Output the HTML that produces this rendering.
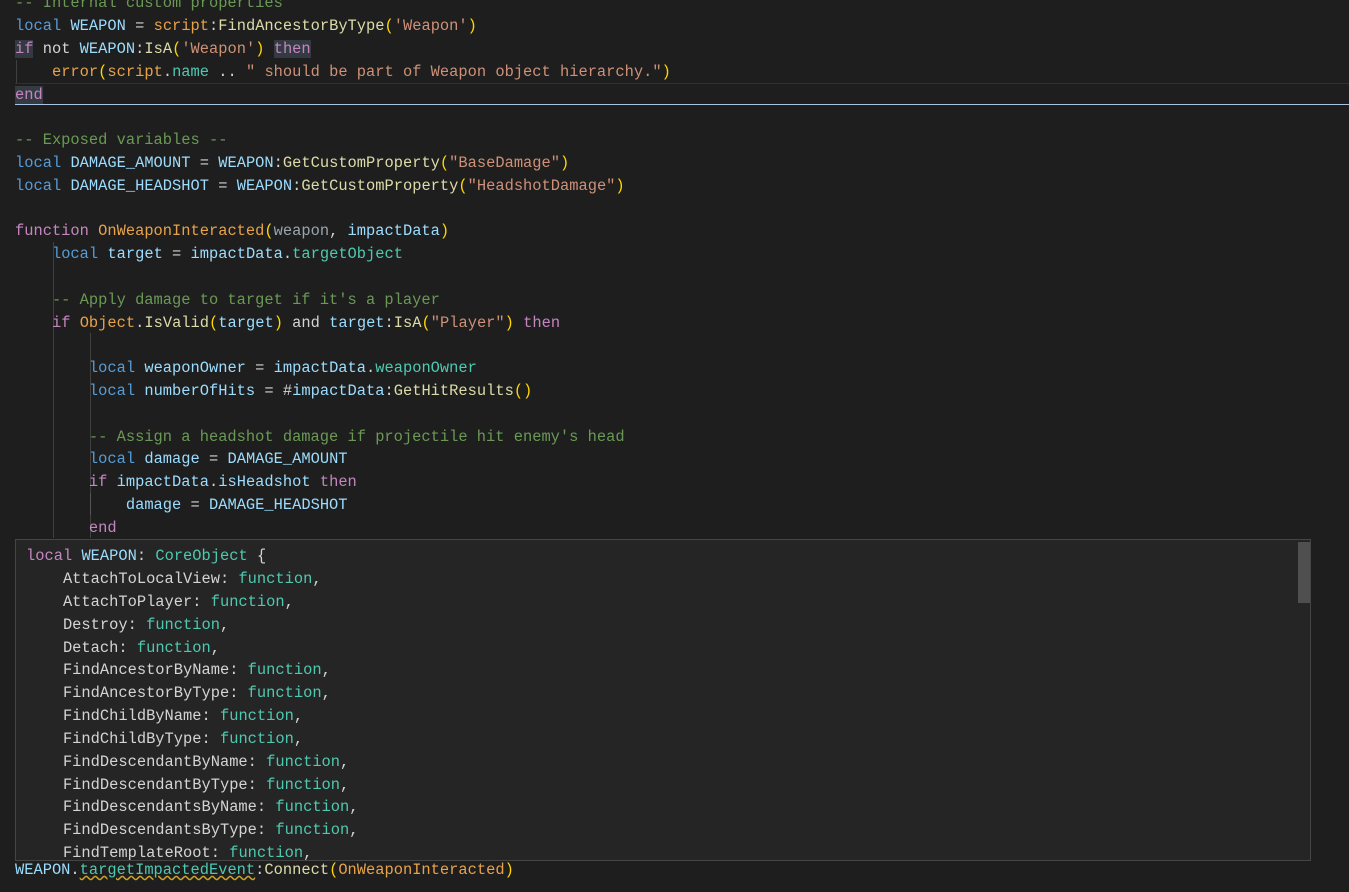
<!DOCTYPE html>
<html><head><meta charset="utf-8"><style>
body{margin:0;width:1349px;height:892px;background:#1e1e1e;overflow:hidden;position:relative;font-family:"Liberation Mono",monospace;font-size:15.4px;color:#d4d4d4}
.l{position:absolute;left:15px;height:22.8px;line-height:22.8px;white-space:pre;transform:translateY(1px)}
.k{color:#569cd6}.v{color:#9cdcfe}.f{color:#dcdcaa}.s{color:#ce9178}.c{color:#6a9955}.p{color:#c586c0}.o{color:#e8a24a}.t{color:#4ec9b0}.b{color:#ffd700}.g{color:#9aa4ad}.w{color:#d4d4d4}
.hl{background:#343a42}
.guide{position:absolute;width:1px;background:#404040}
#pop{position:absolute;left:15px;top:539px;width:1294px;height:320px;background:#252526;border:1px solid #454545;overflow:hidden}
#pop .l{left:10px}
</style></head><body>
<div class="guide" style="left:16px;top:60px;height:23px"></div>
<div class="guide" style="left:53px;top:242px;height:296px"></div>
<div class="guide" style="left:90px;top:333px;height:205px"></div>
<div class="guide" style="left:90px;top:493px;height:22px;background:#555"></div>
<div style="position:absolute;left:15px;right:0;top:83px;height:1px;background:#303030"></div>
<div style="position:absolute;left:15px;right:0;top:104px;height:1px;background:#a8c4e0"></div>

<div class="l c" style="top:-9px">-- Internal custom properties</div>
<div class="l" style="top:14px"><span class="k">local</span> <span class="v">WEAPON</span> = <span class="o">script</span>:<span class="f">FindAncestorByType</span><span class="b">(</span><span class="s">'Weapon'</span><span class="b">)</span></div>
<div class="l" style="top:37px"><span class="p hl">if</span> not <span class="v">WEAPON</span>:<span class="f">IsA</span><span class="b">(</span><span class="s">'Weapon'</span><span class="b">)</span> <span class="p hl">then</span></div>
<div class="l" style="top:60px">    <span class="o">error</span><span class="b">(</span><span class="o">script</span>.<span class="t">name</span> .. <span class="s">" should be part of Weapon object hierarchy."</span><span class="b">)</span></div>
<div class="l" style="top:83px"><span class="p hl">end</span></div>
<div class="l c" style="top:128px">-- Exposed variables --</div>
<div class="l" style="top:151px"><span class="k">local</span> <span class="v">DAMAGE_AMOUNT</span> = <span class="v">WEAPON</span>:<span class="f">GetCustomProperty</span><span class="b">(</span><span class="s">"BaseDamage"</span><span class="b">)</span></div>
<div class="l" style="top:174px"><span class="k">local</span> <span class="v">DAMAGE_HEADSHOT</span> = <span class="v">WEAPON</span>:<span class="f">GetCustomProperty</span><span class="b">(</span><span class="s">"HeadshotDamage"</span><span class="b">)</span></div>
<div class="l" style="top:219px"><span class="p">function</span> <span class="o">OnWeaponInteracted</span><span class="b">(</span><span class="g">weapon</span>, <span class="v">impactData</span><span class="b">)</span></div>
<div class="l" style="top:242px">    <span class="k">local</span> <span class="v">target</span> = <span class="v">impactData</span>.<span class="t">targetObject</span></div>
<div class="l c" style="top:288px">    -- Apply damage to target if it's a player</div>
<div class="l" style="top:311px">    <span class="p">if</span> <span class="o">Object</span>.<span class="f">IsValid</span><span class="b">(</span><span class="v">target</span><span class="b">)</span> and <span class="v">target</span>:<span class="f">IsA</span><span class="b">(</span><span class="s">"Player"</span><span class="b">)</span> <span class="p">then</span></div>
<div class="l" style="top:356px">        <span class="k">local</span> <span class="v">weaponOwner</span> = <span class="v">impactData</span>.<span class="t">weaponOwner</span></div>
<div class="l" style="top:379px">        <span class="k">local</span> <span class="v">numberOfHits</span> = #<span class="v">impactData</span>:<span class="f">GetHitResults</span><span class="b">()</span></div>
<div class="l c" style="top:425px">        -- Assign a headshot damage if projectile hit enemy's head</div>
<div class="l" style="top:447px">        <span class="k">local</span> <span class="v">damage</span> = <span class="v">DAMAGE_AMOUNT</span></div>
<div class="l" style="top:470px">        <span class="p">if</span> <span class="v">impactData</span>.<span class="v">isHeadshot</span> <span class="p">then</span></div>
<div class="l" style="top:493px">            <span class="v">damage</span> = <span class="v">DAMAGE_HEADSHOT</span></div>
<div class="l" style="top:516px">        <span class="p">end</span></div>
<div class="l" style="top:858px"><span class="v">WEAPON</span>.<span class="t" style="text-decoration:underline wavy #c9a227">targetImpactedEvent</span>:<span class="f">Connect</span><span class="b">(</span><span class="o">OnWeaponInteracted</span><span class="b">)</span></div>

<div id="pop">
<div style="position:absolute;right:0;top:2px;width:12px;height:61px;background:#4f4f4f"></div>
<div class="l" style="top:4px"><span class="p">local</span> <span class="v">WEAPON</span>: <span class="t">CoreObject</span> {</div>
<div class="l" style="top:27px">    AttachToLocalView: <span class="t">function</span>,</div>
<div class="l" style="top:50px">    AttachToPlayer: <span class="t">function</span>,</div>
<div class="l" style="top:73px">    Destroy: <span class="t">function</span>,</div>
<div class="l" style="top:96px">    Detach: <span class="t">function</span>,</div>
<div class="l" style="top:118px">    FindAncestorByName: <span class="t">function</span>,</div>
<div class="l" style="top:141px">    FindAncestorByType: <span class="t">function</span>,</div>
<div class="l" style="top:164px">    FindChildByName: <span class="t">function</span>,</div>
<div class="l" style="top:187px">    FindChildByType: <span class="t">function</span>,</div>
<div class="l" style="top:210px">    FindDescendantByName: <span class="t">function</span>,</div>
<div class="l" style="top:233px">    FindDescendantByType: <span class="t">function</span>,</div>
<div class="l" style="top:255px">    FindDescendantsByName: <span class="t">function</span>,</div>
<div class="l" style="top:278px">    FindDescendantsByType: <span class="t">function</span>,</div>
<div class="l" style="top:301px">    FindTemplateRoot: <span class="t">function</span>,</div>
</div>
</body></html>
